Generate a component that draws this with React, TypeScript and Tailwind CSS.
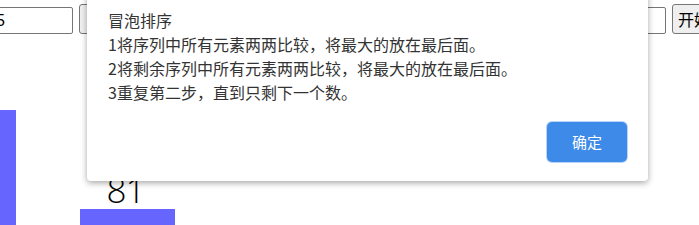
import React from "react";

export default function App() {
  const cjk = { fontFamily: '"Microsoft YaHei", "Noto Sans CJK SC", "Noto Sans", sans-serif' };
  return (
    <div className="relative w-[699px] h-[225px] overflow-hidden bg-white" style={cjk}>
      {/* top controls row */}
      <div className="flex items-start h-[40px] ml-[-8px] pt-[4px]">
        <div className="mt-[3px] w-[81px] h-[27px] border border-[#767676] rounded-[2px] flex items-center pl-[3px] text-[16px] text-black" style={{ fontFamily: '"Liberation Sans", Arial, sans-serif' }}>5</div>
        <div className="ml-[6px] w-[60px] h-[30px] border border-[#767676] rounded-[3px] bg-[#efefef]"></div>
        <div className="flex-1"></div>
      </div>
      <div className="absolute top-[7px] left-[560px] w-[106px] h-[27px] border border-[#767676] rounded-[2px] bg-white"></div>
      <div className="absolute top-[4px] left-[672px] w-[60px] h-[30px] border border-[#767676] rounded-[3px] bg-[#efefef] flex items-center pl-[5px] text-[16px] text-black">开始</div>

      {/* bars */}
      <div className="flex items-end h-[300px] ml-[-30px] mt-[-40px] gap-[64px]">
        <div className="w-[46px] h-[190px] bg-[#6666ff]"></div>
        <div className="flex flex-col items-center">
          <div className="text-[35px] leading-[32px] font-light text-black mb-[3px] mr-[4px] tracking-[-1px]" style={{ fontFamily: '"Open Sans", "Noto Sans", sans-serif' }}>81</div>
          <div className="w-[95px] h-[91px] bg-[#6666ff]"></div>
        </div>
      </div>

      {/* dialog */}
      <div className="absolute left-[87px] top-[-10px] w-[561px] bg-white rounded-[4px] shadow-[0_2px_6px_rgba(0,0,0,0.35)] pl-[21px] pr-[21px] pt-[18px] pb-[19px] text-[#333] text-[16px] leading-[24px]">
        <div>冒泡排序</div>
        <div>1将序列中所有元素两两比较，将最大的放在最后面。</div>
        <div>2将剩余序列中所有元素两两比较，将最大的放在最后面。</div>
        <div>3重复第二步，直到只剩下一个数。</div>
        <div className="flex justify-end mt-[18px]">
          <button className="w-[80px] h-[40px] bg-[#3e8ae9] text-white text-[15px] rounded-[5px] ring-1 ring-[#b9d4f7]">确定</button>
        </div>
      </div>
    </div>
  );
}
